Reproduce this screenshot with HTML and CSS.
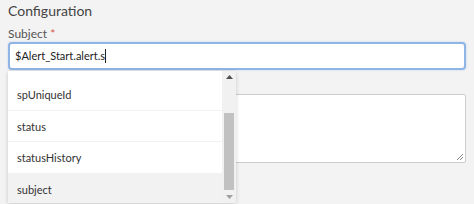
FILE: index.html
```html
<!DOCTYPE html>
<html>
<head>
<meta charset="utf-8">
<link rel="stylesheet" href="styles.css">
</head>
<body>
<div class="panel">
  <div class="title">Configuration</div>
  <div class="field">
    <label class="label">Subject <span class="req">*</span></label>
    <div class="input-wrap">
      <div class="input">$Alert_Start.alert.s<span class="caret"></span></div>
      <div class="dropdown">
        <ul class="list">
          <li class="item">spUniqueId</li>
          <li class="item">status</li>
          <li class="item">statusHistory</li>
          <li class="item active">subject</li>
        </ul>
        <div class="scrollbar">
          <svg class="arrow up" width="7" height="4" viewBox="0 0 7 4"><path d="M0 4 L3.5 0 L7 4 Z" fill="#505050"/></svg>
          <div class="track"><div class="thumb"></div></div>
          <svg class="arrow down" width="7" height="4" viewBox="0 0 7 4"><path d="M0 0 L3.5 4 L7 0 Z" fill="#a0a0a0"/></svg>
        </div>
      </div>
    </div>
  </div>
  <div class="field second">
    <label class="label">Message</label>
    <div class="textarea"><svg class="grip" width="9" height="9" viewBox="0 0 9 9"><path d="M8 2 L2 8 M8 5 L5 8" stroke="#888" stroke-width="1"/></svg></div>
  </div>
</div>
</body>
</html>
```
FILE: styles.css
```css
* { box-sizing: border-box; }
html, body { margin: 0; padding: 0; }
body {
  background: #f3f3f3;
  font-family: Lato, "Open Sans", sans-serif;
  color: #333;
  width: 474px;
  height: 204px;
  overflow: hidden;
}
.panel {
  padding: 0 8px;
}
.title {
  font-size: 14px;
  line-height: 22px;
  color: #444;
  padding-top: 0;
}
.field {
  display: flex;
  flex-direction: column;
}
.label {
  font-size: 12px;
  line-height: 16px;
  color: #555;
  margin-top: 4px;
  margin-bottom: 0;
}
.req { color: #d9534f; }
.input-wrap { position: relative; }
.input {
  height: 28px;
  border: 2px solid #8fb5e6;
  border-radius: 4px;
  background: #fff;
  font-size: 11px;
  line-height: 24px;
  padding-left: 5px;
  color: #222;
  box-shadow: 0 0 2px rgba(102,153,221,0.4);
}
.caret {
  display: inline-block;
  width: 1px;
  height: 14px;
  background: #222;
  vertical-align: -3px;
}
.dropdown {
  position: absolute;
  left: 0;
  top: 29px;
  width: 228px;
  height: 132px;
  background: #fff;
  box-shadow: 0 1px 4px rgba(0,0,0,0.18);
  display: flex;
  z-index: 2;
  overflow: hidden;
}
.list {
  list-style: none;
  margin: 0;
  padding: 8px 0 0;
  flex: 1;
}
.item {
  height: 31.5px;
  line-height: 31px;
  font-size: 11px;
  padding-left: 9px;
  color: #333;
  border-bottom: 1px solid #f2f2f2;
}
.item.active { background: #f2f2f2; }
.scrollbar {
  width: 14px;
  background: #f1f1f1;
  display: flex;
  flex-direction: column;
  align-items: center;
}
.arrow { flex: none; margin: 4px 0; }
.track { flex: 1; width: 100%; padding: 30px 2px 1px; display: flex; }
.thumb { flex: 1; background: #c1c1c1; }
.second { margin-top: 4px; }
.textarea {
  position: relative;
  height: 69px;
  background: #fff;
  border: 1px solid #ccc;
  border-radius: 2px;
}
.grip { position: absolute; right: 1px; bottom: 1px; }
```
